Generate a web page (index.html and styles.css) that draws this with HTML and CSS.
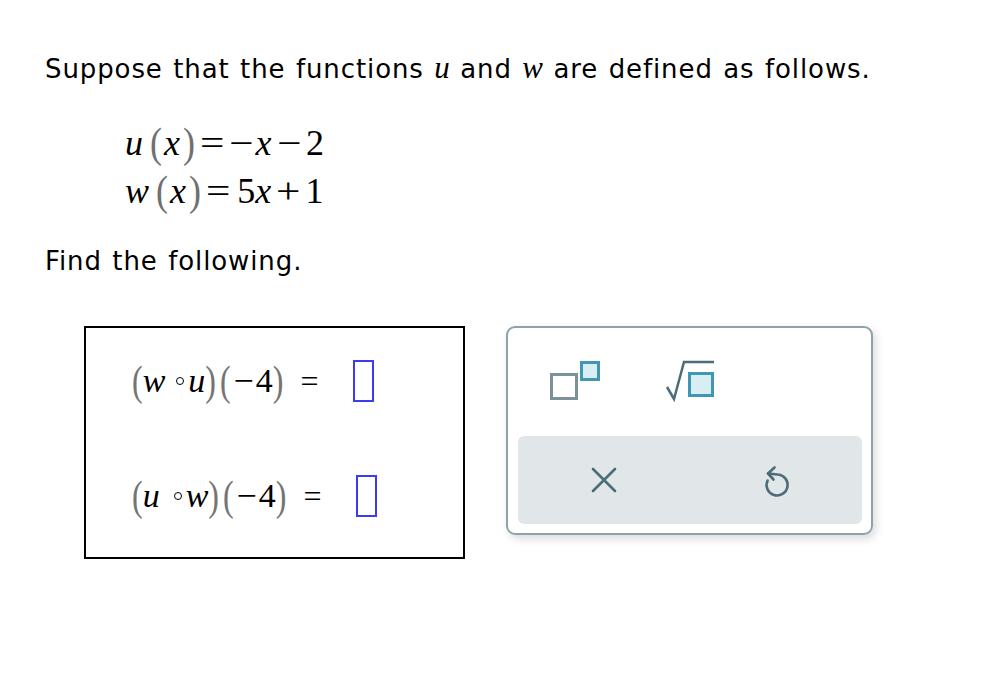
FILE: index.html
```html
<!DOCTYPE html>
<html lang="en">
<head>
<meta charset="utf-8">
<title>Composition of functions</title>
<link rel="stylesheet" href="styles.css">
</head>
<body>
<div class="page">
  <p class="intro">Suppose that the functions <i class="mv">u</i> and <i class="mv">w</i> are defined as follows.</p>
  <div class="defs">
    <div class="eq"><i class="v">u</i><span class="par">(</span><i class="v vx">x</i><span class="par">)</span><span class="rel">=</span><span class="op un">−</span><i class="v">x</i><span class="op bin">−</span><span class="num">2</span></div>
    <div class="eq"><i class="v">w</i><span class="par">(</span><i class="v vx">x</i><span class="par">)</span><span class="rel">=</span><span class="num">5</span><i class="v">x</i><span class="op bin">+</span><span class="num">1</span></div>
  </div>
  <p class="find">Find the following.</p>
  <div class="work">
    <div class="answers">
      <div class="row">
        <span class="bpar">(</span><i class="v">w</i><span class="ring"></span><i class="v vr">u</i><span class="bpar">)</span><span class="bpar bp2">(</span><span class="minus">−</span><span class="four">4</span><span class="bpar">)</span><span class="req">=</span><span class="slot"></span>
      </div>
      <div class="row">
        <span class="bpar">(</span><i class="v">u</i><span class="ring ring2"></span><i class="v vr">w</i><span class="bpar">)</span><span class="bpar bp2">(</span><span class="minus">−</span><span class="four">4</span><span class="bpar">)</span><span class="req">=</span><span class="slot"></span>
      </div>
    </div>
    <div class="pad">
      <div class="tools">
        <div class="tool">
          <svg width="50" height="40" viewBox="0 0 50 40">
            <rect x="1.5" y="13.5" width="25" height="24" fill="#fff" stroke="#7b929b" stroke-width="3"/>
            <rect x="31.5" y="1.5" width="17" height="17" fill="#d6eef4" stroke="#3f97b2" stroke-width="3"/>
          </svg>
        </div>
        <div class="tool">
          <svg width="50" height="44" viewBox="0 0 50 44">
            <polyline points="2,28 9,40 19,3 49,3" fill="none" stroke="#4d6c79" stroke-width="2.5" stroke-linejoin="miter"/>
            <rect x="24.5" y="14.5" width="23" height="22" fill="#d6eef4" stroke="#3f97b2" stroke-width="3"/>
          </svg>
        </div>
        <div class="tool"></div>
      </div>
      <div class="actions">
        <div class="act">
          <svg width="26" height="26" viewBox="0 0 26 26">
            <path d="M2 2 L24 24 M24 2 L2 24" stroke="#4d6c79" stroke-width="2.6" stroke-linecap="round"/>
          </svg>
        </div>
        <div class="act">
          <svg width="42" height="42" viewBox="0 0 42 42">
            <path d="M12.6 21.5 A10.5 10.5 0 1 0 22.5 15.5 L13 14.5" fill="none" stroke="#4d6c79" stroke-width="2.6" stroke-linecap="round"/>
            <path d="M19.5 8.5 L13 14.5 L18.5 20.5" fill="none" stroke="#4d6c79" stroke-width="2.6" stroke-linecap="round" stroke-linejoin="round"/>
          </svg>
        </div>
      </div>
    </div>
  </div>
</div>
</body>
</html>
```
FILE: styles.css
```css
html, body {
  margin: 0;
  padding: 0;
  background: #fff;
}

.page {
  padding: 54px 0 0 45px;
  font-family: "DejaVu Sans", Verdana, sans-serif;
  color: #000;
}

.intro, .find {
  margin: 0;
  font-size: 26px;
  line-height: 30px;
  letter-spacing: 0.9px;
  word-spacing: 1.3px;
}

.mv {
  font-family: "Liberation Serif", "Times New Roman", serif;
  font-style: italic;
  font-size: 31px;
  line-height: 0;
  letter-spacing: 0;
}

.defs {
  margin: 35px 0 0 80px;
  font-family: "Liberation Serif", "Times New Roman", serif;
  font-size: 36px;
  line-height: 48px;
}

.eq {
  display: flex;
  align-items: baseline;
  height: 48px;
}

.v {
  font-style: italic;
}

.par {
  color: #707070;
  display: inline-block;
  transform: scaleY(1.15);
  margin-left: 7px;
}

.par + .vx {
  margin-left: 2px;
}

.vx + .par {
  margin-left: 3px;
}

.rel,
.op {
  display: inline-block;
  transform: scaleX(1.2);
}

.rel {
  margin: 0 9px 0 7px;
}

.un {
  margin-right: 4px;
}

.bin {
  margin: 0 7px;
}

.find {
  margin-top: 31px;
}

.work {
  display: flex;
  align-items: flex-start;
  margin-top: 50px;
  margin-left: 39px;
}

.answers {
  box-sizing: border-box;
  width: 381px;
  height: 233px;
  border: 2px solid #000;
  padding: 23px 0 0 46px;
  display: flex;
  flex-direction: column;
  gap: 55px;
  font-family: "Liberation Serif", "Times New Roman", serif;
  font-size: 34px;
}

.row {
  height: 60px;
  display: flex;
  align-items: center;
}

.bpar {
  color: #747474;
  display: inline-block;
  transform: scaleY(1.3);
  font-size: 32px;
}

.ring {
  display: inline-block;
  box-sizing: border-box;
  width: 8px;
  height: 8px;
  border: 1.4px solid #000;
  border-radius: 50%;
  margin: 0 4px 0 11px;
}

.ring2 {
  margin-left: 14px;
}

.bp2 {
  margin-left: 4px;
}

.minus {
  display: inline-block;
  transform: scaleX(1.05);
  margin-left: 3px;
}

.four {
  margin-left: 3px;
}

.req {
  margin-left: 17px;
  font-size: 32px;
}

.slot {
  box-sizing: border-box;
  display: inline-block;
  width: 21px;
  height: 42px;
  border: 2px solid #3b3bf5;
  margin-left: 34px;
}

.pad {
  box-sizing: border-box;
  width: 367px;
  height: 209px;
  margin-left: 41px;
  border: 2px solid #8fa1aa;
  border-radius: 9px;
  padding: 0 9px 9px 10px;
  display: flex;
  flex-direction: column;
  box-shadow: 3px 4px 8px rgba(0, 0, 0, 0.14);
}

.tools {
  height: 108px;
  display: grid;
  grid-template-columns: repeat(3, 1fr);
}

.tool {
  display: flex;
  align-items: center;
  justify-content: center;
  padding-bottom: 2px;
}

.actions {
  flex: 1;
  background: #e1e6e9;
  border-radius: 6px;
  display: grid;
  grid-template-columns: 1fr 1fr;
}

.act {
  display: flex;
  align-items: center;
  justify-content: center;
}
```
